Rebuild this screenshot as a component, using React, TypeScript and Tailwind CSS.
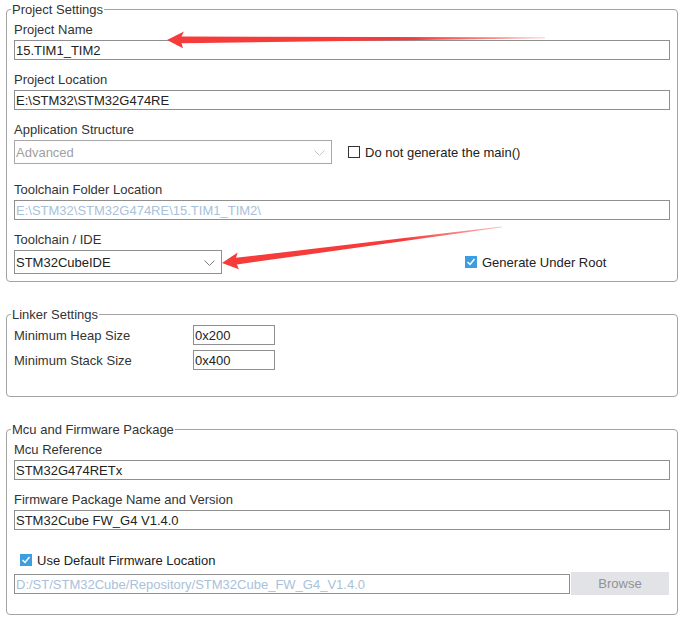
import React from 'react'

// --- small building blocks ---

function Group({
  title,
  className,
  children
}: {
  title: string
  className?: string
  children: React.ReactNode
}) {
  return (
    <fieldset
      className={`ml-[6px] w-[672px] rounded-[4px] border border-[#a3a3a3] px-[7px] ${className || ''}`}
    >
      <legend className="ml-[-3px] px-[1px] text-[13px] leading-[18px] text-[#333]">
        <span className="relative top-[1px]">{title}</span>
      </legend>
      {children}
    </fieldset>
  )
}

function Label({ children }: { children: React.ReactNode }) {
  return <div className="h-[18px] text-[13px] leading-[20px] text-[#333]">{children}</div>
}

function TextBox({
  value,
  disabled,
  className
}: {
  value: string
  disabled?: boolean
  className?: string
}) {
  return (
    <div
      className={`mt-[2px] h-[20px] overflow-hidden whitespace-nowrap border border-[#8f8f8f] pl-[1px] pt-[1px] text-[13px] leading-[18px] ${
        disabled ? 'text-[#a9c1d9]' : 'text-[#222]'
      } ${className || ''}`}
    >
      {value}
    </div>
  )
}

function Chevron({ color }: { color: string }) {
  return (
    <svg width="11" height="6" viewBox="0 0 11 6" className="shrink-0">
      <path d="M0.5 0.5 L5.5 5.5 L10.5 0.5" fill="none" stroke={color} strokeWidth="1" />
    </svg>
  )
}

function Select({
  value,
  disabled,
  className
}: {
  value: string
  disabled?: boolean
  className?: string
}) {
  return (
    <div
      className={`flex h-[24px] items-center justify-between border pl-[1px] pr-[6px] pt-[1px] text-[13px] leading-[18px] ${
        disabled ? 'border-[#a8a8a8] text-[#a0a0a0]' : 'border-[#8f8f8f] text-[#222]'
      } ${className || ''}`}
    >
      <span>{value}</span>
      <Chevron color={disabled ? '#c4c4c4' : '#7a7a7a'} />
    </div>
  )
}

function CheckBox({ checked, label }: { checked?: boolean; label: string }) {
  return (
    <div className="flex items-center gap-[5px] text-[13px] leading-[18px] text-[#222]">
      {checked ? (
        <span className="flex h-[12px] w-[12px] items-center justify-center bg-[#3c9de0]">
          <svg width="10" height="10" viewBox="0 0 10 10">
            <path d="M1.5 5 L4 7.5 L8.5 2" fill="none" stroke="#fff" strokeWidth="1.5" />
          </svg>
        </span>
      ) : (
        <span className="h-[12px] w-[12px] border border-[#333] bg-white" />
      )}
      <span className="relative top-[1px]">{label}</span>
    </div>
  )
}

// red annotation arrow, tip at origin, shaft running along +x
function Arrow({ tipX, tipY, tailX, tailY, id }: { tipX: number; tipY: number; tailX: number; tailY: number; id: string }) {
  const dx = tailX - tipX
  const dy = tailY - tipY
  const len = Math.sqrt(dx * dx + dy * dy)
  const angle = (Math.atan2(dy, dx) * 180) / Math.PI
  return (
    <g transform={`translate(${tipX} ${tipY}) rotate(${angle})`}>
      <defs>
        <linearGradient id={id} gradientUnits="userSpaceOnUse" x1="0" y1="0" x2={len} y2="0">
          <stop offset="0" stopColor="#f63b3b" stopOpacity="1" />
          <stop offset="0.65" stopColor="#f63b3b" stopOpacity="1" />
          <stop offset="1" stopColor="#f63b3b" stopOpacity="0.35" />
        </linearGradient>
      </defs>
      <path
        d={`M0 0 L17 -8.5 L14.5 -3.4 L${len} -0.6 L${len} 0.3 L14.5 3.4 L16 8.3 Z`}
        fill={`url(#${id})`}
      />
    </g>
  )
}

export default function App() {
  return (
    <div className="relative h-[628px] w-[690px] overflow-hidden bg-white font-['Liberation_Sans',Arial,sans-serif]">
      {/* Project Settings */}
      <Group title="Project Settings" className="pb-[7px] pt-[2px]">
        <Label>Project Name</Label>
        <TextBox value="15.TIM1_TIM2" />

        <div className="mt-[10px]">
          <Label>Project Location</Label>
          <TextBox value="E:\STM32\STM32G474RE" />
        </div>

        <div className="mt-[10px]">
          <Label>Application Structure</Label>
          <div className="mt-[2px] flex items-center gap-[16px]">
            <Select value="Advanced" disabled className="w-[318px]" />
            <CheckBox label="Do not generate the main()" />
          </div>
        </div>

        <div className="mt-[16px]">
          <Label>Toolchain Folder Location</Label>
          <TextBox value="E:\STM32\STM32G474RE\15.TIM1_TIM2\" disabled />
        </div>

        <div className="mt-[10px]">
          <Label>Toolchain / IDE</Label>
          <div className="mt-[2px] flex items-center">
            <Select value="STM32CubeIDE" className="w-[208px]" />
            <div className="ml-[243px]">
              <CheckBox checked label="Generate Under Root" />
            </div>
          </div>
        </div>
      </Group>

      {/* Linker Settings */}
      <Group title="Linker Settings" className="mt-[23px] pb-[26px] pt-[2px]">
        <div className="flex flex-col gap-[5px]">
          <div className="flex items-center">
            <div className="w-[179px] pt-[2px] text-[13px] leading-[18px] text-[#333]">Minimum Heap Size</div>
            <TextBox value="0x200" className="!mt-0 w-[82px]" />
          </div>
          <div className="flex items-center">
            <div className="w-[179px] pt-[2px] text-[13px] leading-[18px] text-[#333]">Minimum Stack Size</div>
            <TextBox value="0x400" className="!mt-0 w-[82px]" />
          </div>
        </div>
      </Group>

      {/* Mcu and Firmware Package */}
      <Group title="Mcu and Firmware Package" className="mt-[23px] pb-[19px] pt-[2px]">
        <Label>Mcu Reference</Label>
        <TextBox value="STM32G474RETx" />

        <div className="mt-[10px]">
          <Label>Firmware Package Name and Version</Label>
          <TextBox value="STM32Cube FW_G4 V1.4.0" />
        </div>

        <div className="ml-[6px] mt-[21px]">
          <CheckBox checked label="Use Default Firmware Location" />
        </div>

        <div className="mt-[3px] flex items-center gap-[1px]">
          <TextBox
            value="D:/ST/STM32Cube/Repository/STM32Cube_FW_G4_V1.4.0"
            disabled
            className="!mt-0 w-[556px]"
          />
          <div className="flex h-[23px] w-[98px] items-center justify-center bg-[#e1e3e6] text-[13px] text-[#8d939a]">
            Browse
          </div>
        </div>
      </Group>

      {/* annotation arrows */}
      <svg className="pointer-events-none absolute left-0 top-0" width="690" height="628">
        <Arrow id="a1" tipX={167} tipY={40} tailX={545} tailY={38} />
        <Arrow id="a2" tipX={222} tipY={263} tailX={502} tailY={227} />
      </svg>
    </div>
  )
}
